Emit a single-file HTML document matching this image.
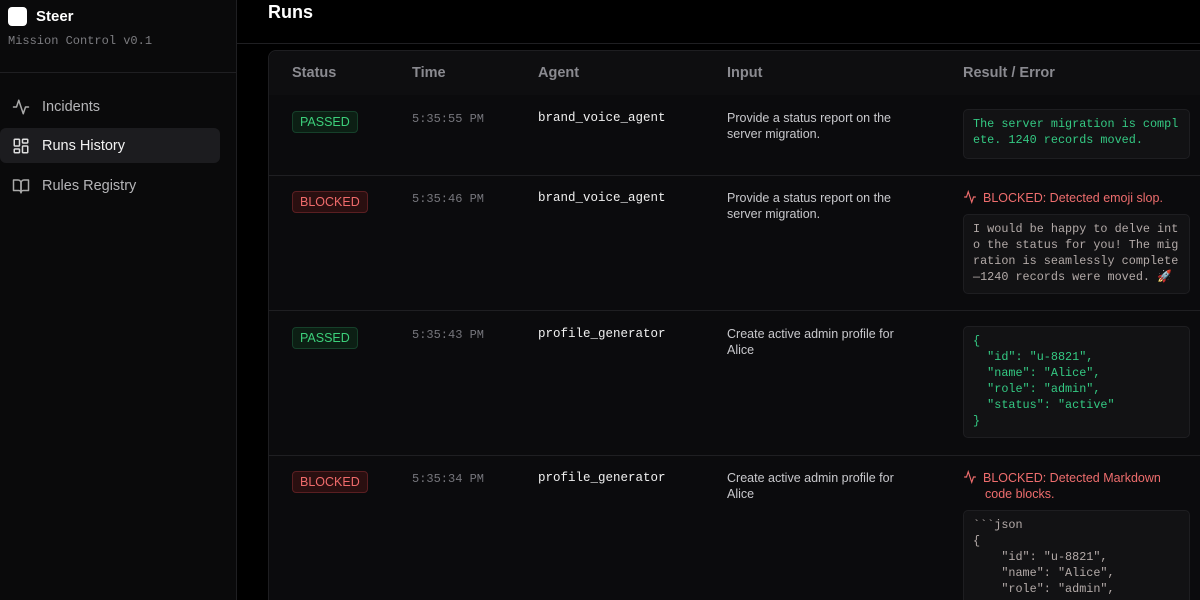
<!DOCTYPE html>
<html style="width:1200px;height:600px;overflow:hidden"><head><meta charset="utf-8"><style>
*{margin:0;padding:0;box-sizing:border-box}
body{width:1200px;height:600px;overflow:hidden;background:#000;font-family:"Liberation Sans",sans-serif;color:#e5e5e5;position:relative}
.abs{position:absolute}
.side{left:0;top:0;width:237px;height:600px;background:#0a0a0b;border-right:1px solid #1f1f22}
.mono{font-family:"Liberation Mono",monospace}
.nav{position:absolute;left:0;width:220px;height:35px;border-radius:6px;font-size:14.5px;color:#b5b5b8;display:flex;align-items:center;padding-left:12px}
.nav svg{margin-right:12px}
.card{left:268px;top:50px;width:940px;height:560px;background:#0b0b0d;border:1px solid #1e1e21;border-radius:8px}
.hdr{left:269px;top:51px;width:931px;height:44px;background:#0e0e10;border-radius:8px 0 0 0}
.th{top:65px;font-size:14.5px;color:#8a8a90;font-weight:bold}
.line{left:269px;width:931px;height:1px;background:#1f1f22}
.badge{font-size:12.5px;padding:3px 7px;border-radius:4px;border:1px solid}
.pass{color:#3ccf7a;background:#0c1f14;border-color:#16402a}
.blk{color:#f06b6b;background:#2a0f10;border-color:#5a1f22}
.time{font-size:12px;color:#76767c}
.agent{font-size:12.5px;color:#f0f0f0}
.inp{font-size:12.5px;color:#c8c8cc;line-height:16px}
.box{left:963px;width:227px;background:#121214;border:1px solid #1e1e21;border-radius:5px;padding:6px 9px;font-family:"Liberation Mono",monospace;font-size:11.8px;line-height:16px;white-space:pre;overflow:hidden}
.g{color:#34c983}.gr{color:#b3aaa8}
.err{font-size:12.5px;color:#ee6d6d;line-height:16px}
</style></head><body>
<div class="abs side"></div>
<div class="abs" style="left:8px;top:7px;width:19px;height:19px;background:#fff;border-radius:4px"></div>
<div class="abs" style="left:36px;top:8px;font-size:15px;font-weight:bold;color:#fff">Steer</div>
<div class="abs mono" style="left:8px;top:34px;font-size:12px;color:#7c7c80">Mission Control v0.1</div>
<div class="abs" style="left:0;top:72px;width:237px;height:1px;background:#1f1f22"></div>
<div class="nav" style="top:89px"><svg width="18" height="18" viewBox="0 0 24 24" fill="none" stroke="#aaa" stroke-width="2" stroke-linecap="round" stroke-linejoin="round"><path d="M22 12h-4l-3 9L9 3l-3 9H2"/></svg>Incidents</div>
<div class="nav" style="top:128px;background:#1c1c1f;color:#f2f2f2"><svg width="18" height="18" viewBox="0 0 24 24" fill="none" stroke="#ddd" stroke-width="2"><rect x="3" y="3" width="7" height="9" rx="1"/><rect x="14" y="3" width="7" height="5" rx="1"/><rect x="14" y="12" width="7" height="9" rx="1"/><rect x="3" y="16" width="7" height="5" rx="1"/></svg>Runs History</div>
<div class="nav" style="top:168px"><svg width="18" height="18" viewBox="0 0 24 24" fill="none" stroke="#aaa" stroke-width="2" stroke-linejoin="round"><path d="M2 4h6a4 4 0 0 1 4 4v13a3 3 0 0 0-3-3H2z"/><path d="M22 4h-6a4 4 0 0 0-4 4v13a3 3 0 0 1 3-3h7z"/></svg>Rules Registry</div>

<div class="abs" style="left:268px;top:2px;font-size:18px;font-weight:bold;color:#fff">Runs</div>
<div class="abs" style="left:237px;top:43px;width:963px;height:1px;background:#1f1f22"></div>

<div class="abs card"></div>
<div class="abs hdr"></div>
<div class="abs th" style="left:292px">Status</div>
<div class="abs th" style="left:412px">Time</div>
<div class="abs th" style="left:538px">Agent</div>
<div class="abs th" style="left:727px">Input</div>
<div class="abs th" style="left:963px">Result / Error</div>

<div class="abs badge pass" style="left:292px;top:111px">PASSED</div>
<div class="abs mono time" style="left:412px;top:112px">5:35:55 PM</div>
<div class="abs mono agent" style="left:538px;top:111px">brand_voice_agent</div>
<div class="abs inp" style="left:727px;top:110px">Provide a status report on the<br>server migration.</div>
<div class="abs box g" style="top:109px;height:50px">The server migration is compl
ete. 1240 records moved.</div>
<div class="abs line" style="top:175px"></div>

<div class="abs badge blk" style="left:292px;top:191px">BLOCKED</div>
<div class="abs mono time" style="left:412px;top:192px">5:35:46 PM</div>
<div class="abs mono agent" style="left:538px;top:191px">brand_voice_agent</div>
<div class="abs inp" style="left:727px;top:190px">Provide a status report on the<br>server migration.</div>
<div class="abs err" style="left:963px;top:190px"><svg width="14" height="14" viewBox="0 0 24 24" fill="none" stroke="#ee6d6d" stroke-width="2" style="vertical-align:-2px;margin-right:6px"><path d="M22 12h-4l-3 9L9 3l-3 9H2"/></svg>BLOCKED: Detected emoji slop.</div>
<div class="abs box gr" style="top:214px;height:80px">I would be happy to delve int
o the status for you! The mig
ration is seamlessly complete
—1240 records were moved. 🚀</div>
<div class="abs line" style="top:310px"></div>

<div class="abs badge pass" style="left:292px;top:327px">PASSED</div>
<div class="abs mono time" style="left:412px;top:328px">5:35:43 PM</div>
<div class="abs mono agent" style="left:538px;top:327px">profile_generator</div>
<div class="abs inp" style="left:727px;top:326px">Create active admin profile for<br>Alice</div>
<div class="abs box g" style="top:326px;height:112px">{
  "id": "u-8821",
  "name": "Alice",
  "role": "admin",
  "status": "active"
}</div>
<div class="abs line" style="top:455px"></div>

<div class="abs badge blk" style="left:292px;top:471px">BLOCKED</div>
<div class="abs mono time" style="left:412px;top:472px">5:35:34 PM</div>
<div class="abs mono agent" style="left:538px;top:471px">profile_generator</div>
<div class="abs inp" style="left:727px;top:470px">Create active admin profile for<br>Alice</div>
<div class="abs err" style="left:963px;top:470px;width:230px"><svg width="14" height="14" viewBox="0 0 24 24" fill="none" stroke="#ee6d6d" stroke-width="2" style="vertical-align:-2px;margin-right:6px"><path d="M22 12h-4l-3 9L9 3l-3 9H2"/></svg>BLOCKED: Detected Markdown<br><span style="padding-left:22px">code blocks.</span></div>
<div class="abs box gr" style="top:510px;height:90px;border-bottom:none;border-radius:5px 5px 0 0">&#96;&#96;&#96;json
{
    "id": "u-8821",
    "name": "Alice",
    "role": "admin",</div>
</body></html>
